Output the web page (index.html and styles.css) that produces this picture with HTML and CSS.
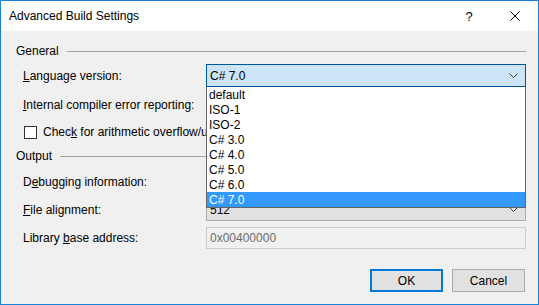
FILE: index.html
```html
<!DOCTYPE html>
<html lang="en">
<head>
    <meta charset="UTF-8">
    <title>Advanced Build Settings</title>
    <link rel="stylesheet" href="styles.css">
</head>
<body>

    <div class="window">
        <!-- Title bar -->
        <div class="titlebar">
            <span class="title">Advanced Build Settings</span>
            <span class="help">?</span>
            <span class="close">
                <svg width="10" height="10" viewBox="0 0 10 10"><path d="M0.5 0.5 L9.5 9.5 M9.5 0.5 L0.5 9.5" stroke="#000" stroke-width="1" fill="none"/></svg>
            </span>
        </div>

        <div class="content">
            <!-- General -->
            <div class="group-head"><span>General</span><div class="rule"></div></div>

            <div class="row">
                <div class="label"><u>L</u>anguage version:</div>
                <div class="control">
                    <div class="combo open">
                        <span>C# 7.0</span>
                        <svg class="chevron" width="9" height="5" viewBox="0 0 9 5"><path d="M0.5 0.5 L4.5 4.5 L8.5 0.5" stroke="#404040" fill="none"/></svg>
                    </div>
                    <div class="dropdown">
                        <div class="item">default</div>
                        <div class="item">ISO-1</div>
                        <div class="item">ISO-2</div>
                        <div class="item">C# 3.0</div>
                        <div class="item">C# 4.0</div>
                        <div class="item">C# 5.0</div>
                        <div class="item">C# 6.0</div>
                        <div class="item selected">C# 7.0</div>
                    </div>
                </div>
            </div>

            <div class="row row-2">
                <div class="label"><u>I</u>nternal compiler error reporting:</div>
                <div class="control"><div class="combo"></div></div>
            </div>

            <div class="check-row">
                <div class="checkbox"></div>
                <span>Chec<u>k</u> for arithmetic overflow/underflow</span>
            </div>

            <!-- Output -->
            <div class="group-head out"><span>Output</span><div class="rule"></div></div>

            <div class="row row-d">
                <div class="label">D<u>e</u>bugging information:</div>
                <div class="control"><div class="combo"></div></div>
            </div>

            <div class="row row-f">
                <div class="label"><u>F</u>ile alignment:</div>
                <div class="control">
                    <div class="combo">
                        <span>512</span>
                        <svg class="chevron" width="9" height="5" viewBox="0 0 9 5"><path d="M0.5 0.5 L4.5 4.5 L8.5 0.5" stroke="#404040" fill="none"/></svg>
                    </div>
                </div>
            </div>

            <div class="row row-l">
                <div class="label">Library <u>b</u>ase address:</div>
                <div class="control"><div class="textbox">0x00400000</div></div>
            </div>

            <div class="buttons">
                <button class="btn default">OK</button>
                <button class="btn">Cancel</button>
            </div>
        </div>
    </div>

</body>
</html>
```

FILE: styles.css
```css
/* General Styles */
html, body {
    margin: 0;
    padding: 0;
}

body {
    font-family: "Liberation Sans", Arial, sans-serif;
    font-size: 12px;
    color: #000;
    background: #f0f0f0;
}

u {
    text-decoration: underline;
    text-underline-offset: 1px;
}

/* Window frame */
.window {
    width: 539px;
    height: 305px;
    box-sizing: border-box;
    border: 1px solid #1883d7;
    background: #f0f0f0;
    display: flex;
    flex-direction: column;
}

.titlebar {
    height: 30px;
    background: #fff;
    display: flex;
    align-items: center;
    flex-shrink: 0;
}

.title {
    margin-left: 8px;
    flex: 1;
    padding-bottom: 1px;
}

.help {
    font-size: 13px;
    width: 46px;
    text-align: center;
}

.close {
    width: 46px;
    display: flex;
    justify-content: center;
}

/* Dialog content */
.content {
    flex: 1;
    display: flex;
    flex-direction: column;
    padding: 0 12px 0 15px;
}

.group-head {
    display: flex;
    align-items: center;
    height: 16px;
    margin-top: 12px;
}

.group-head.out {
    margin-top: 8px;
}

.group-head .rule {
    flex: 1;
    height: 1px;
    background: #a0a0a0;
    margin-left: 8px;
    margin-top: 1px;
}

.row {
    display: flex;
    align-items: center;
    height: 23px;
    margin-top: 5px;
}

.row-2 { margin-top: 6px; }
.row-d { margin-top: 6px; }
.row-f { margin-top: 5px; }
.row-l { margin-top: 6px; height: 22px; }

.label {
    width: 183px;
    padding-left: 7px;
    flex-shrink: 0;
}

.control {
    flex: 1;
    height: 100%;
    position: relative;
}

.combo {
    height: 100%;
    box-sizing: border-box;
    border: 1px solid #adadad;
    background: #e1e1e1;
    display: flex;
    align-items: center;
    padding: 0 7px 0 3px;
}

.combo span {
    flex: 1;
}

.combo.open {
    background: #cce4f7;
    border-color: #005499;
}

.chevron {
    display: block;
}

/* Dropdown list popup */
.dropdown {
    position: absolute;
    left: 0;
    right: 0;
    top: 23px;
    background: #fff;
    border: 1px solid #646464;
    border-top: none;
    z-index: 5;
}

.item {
    height: 15px;
    box-sizing: border-box;
    padding: 1px 0 0 2px;
    line-height: 14px;
}

.item.selected {
    background: #3399ff;
    color: #fff;
}

/* Checkbox row, clipped where the popup list covers it */
.check-row {
    display: flex;
    align-items: center;
    height: 16px;
    margin-top: 8px;
    padding-left: 8px;
    width: 182px;
    white-space: nowrap;
    overflow: hidden;
}

.checkbox {
    width: 13px;
    height: 13px;
    box-sizing: border-box;
    border: 1px solid #333;
    background: #fff;
    margin-right: 6px;
    flex-shrink: 0;
}

.textbox {
    height: 100%;
    box-sizing: border-box;
    border: 1px solid #cccccc;
    background: #f0f0f0;
    color: #6d6d6d;
    display: flex;
    align-items: center;
    padding-left: 3px;
}

/* Buttons */
.buttons {
    display: flex;
    justify-content: flex-end;
    gap: 9px;
    margin-top: 20px;
    padding-right: 1px;
}

.btn {
    width: 73px;
    height: 23px;
    box-sizing: border-box;
    border: 1px solid #adadad;
    background: #e1e1e1;
    font-family: inherit;
    font-size: 12px;
    color: #000;
    padding: 0;
}

.btn.default {
    border: 2px solid #0078d7;
}
```
